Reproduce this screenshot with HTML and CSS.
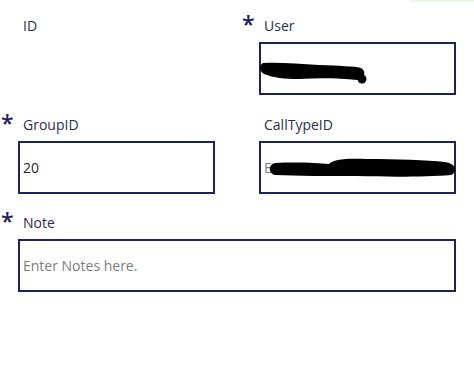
FILE: index.html
```html
<!DOCTYPE html>
<html>
<head>
<meta charset="utf-8">
<link rel="stylesheet" href="styles.css">
</head>
<body>
<div class="topbar"></div>
<form class="form">
  <div class="field">
    <div class="label">ID</div>
  </div>
  <div class="field">
    <div class="label"><span class="req">*</span>User</div>
    <div class="box">
      <svg class="scribble" width="110" height="26" viewBox="0 0 110 26">
        <path d="M4 4 C 20 3, 40 5, 60 6 C 80 7, 95 7, 102 9 C 106 11, 106 16, 104 20 L 98 21 C 80 19, 60 19, 40 20 C 25 20, 15 19, 5 15 C 0 12, 0 6, 4 4 Z" fill="#000"/>
        <circle cx="103" cy="20" r="4.5" fill="#000"/>
      </svg>
    </div>
  </div>
  <div class="field">
    <div class="label"><span class="req">*</span>GroupID</div>
    <div class="box"><span class="value">20</span></div>
  </div>
  <div class="field">
    <div class="label">CallTypeID</div>
    <div class="box">
      <span class="placeholder">Enter</span>
      <svg class="scribble2" width="192" height="22" viewBox="0 0 192 22">
        <path d="M8 5 C 30 4, 50 5, 62 6 C 66 1, 80 0, 100 1 C 130 1, 160 2, 178 4 C 190 6, 191 14, 184 17 C 160 19, 120 19, 90 18 C 60 18, 30 18, 8 17 C 1 16, 1 6, 8 5 Z" fill="#000"/>
      </svg>
    </div>
  </div>
  <div class="field wide">
    <div class="label"><span class="req">*</span>Note</div>
    <div class="box"><span class="placeholder">Enter Notes here.</span></div>
  </div>
</form>
</body>
</html>
```
FILE: styles.css
```css
html, body {
  margin: 0;
  padding: 0;
  background: #fff;
}
body {
  width: 474px;
  height: 373px;
  overflow: hidden;
  position: relative;
  font-family: "Open Sans", "Noto Sans", sans-serif;
}
.topbar {
  position: absolute;
  top: 0;
  left: 410px;
  width: 64px;
  height: 2px;
  background: #edf7e6;
}
.form {
  display: grid;
  grid-template-columns: 241px 241px;
  row-gap: 19.5px;
  padding-top: 16px;
}
.field {
  padding-left: 18px;
  display: flex;
  flex-direction: column;
}
.field.wide {
  grid-column: 1 / 3;
}
.label {
  position: relative;
  font-size: 14px;
  line-height: 20px;
  height: 20px;
  color: #2c2d4c;
  padding-left: 5px;
  margin-bottom: 6px;
}
.req {
  position: absolute;
  left: -17px;
  top: -3px;
  font-size: 23px;
  line-height: 23px;
  font-weight: 600;
  color: #1d2060;
}
.box {
  position: relative;
  box-sizing: border-box;
  width: 197px;
  height: 53px;
  border: 2px solid #1f2259;
  display: flex;
  align-items: center;
  padding-left: 3px;
  font-size: 14px;
  color: #252525;
}
.field.wide .box {
  width: 438px;
}
.placeholder {
  color: #7d7d7d;
}
.scribble {
  position: absolute;
  left: -2px;
  top: 15px;
}
.scribble2 {
  position: absolute;
  left: 6px;
  top: 15px;
}
```
